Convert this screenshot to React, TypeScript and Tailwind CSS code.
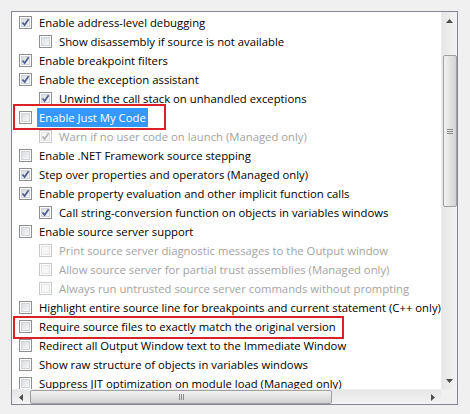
import React from "react";

type Row = { t: string; c: boolean; l: number; d?: boolean; hl?: boolean };

const rows: Row[] = [
  { t: "Enable address-level debugging", c: true, l: 0 },
  { t: "Show disassembly if source is not available", c: false, l: 1 },
  { t: "Enable breakpoint filters", c: true, l: 0 },
  { t: "Enable the exception assistant", c: true, l: 0 },
  { t: "Unwind the call stack on unhandled exceptions", c: true, l: 1 },
  { t: "Enable Just My Code", c: false, l: 0, hl: true },
  { t: "Warn if no user code on launch (Managed only)", c: true, l: 1, d: true },
  { t: "Enable .NET Framework source stepping", c: false, l: 0 },
  { t: "Step over properties and operators (Managed only)", c: true, l: 0 },
  { t: "Enable property evaluation and other implicit function calls", c: true, l: 0 },
  { t: "Call string-conversion function on objects in variables windows", c: true, l: 1 },
  { t: "Enable source server support", c: false, l: 0 },
  { t: "Print source server diagnostic messages to the Output window", c: false, l: 1, d: true },
  { t: "Allow source server for partial trust assemblies (Managed only)", c: false, l: 1, d: true },
  { t: "Always run untrusted source server commands without prompting", c: false, l: 1, d: true },
  { t: "Highlight entire source line for breakpoints and current statement (C++ only)", c: false, l: 0 },
  { t: "Require source files to exactly match the original version", c: false, l: 0 },
  { t: "Redirect all Output Window text to the Immediate Window", c: false, l: 0 },
  { t: "Show raw structure of objects in variables windows", c: false, l: 0 },
  { t: "Suppress JIT optimization on module load (Managed only)", c: false, l: 0 },
];

function Box({ checked, disabled }: { checked: boolean; disabled?: boolean }) {
  return (
    <div
      className={
        "relative w-[13px] h-[13px] shrink-0 border p-[1px] " +
        (disabled ? "border-[#c9c9c9] bg-white" : "border-[#8e8f8f] bg-white")
      }
    >
      <div
        className={
          "w-full h-full border " +
          (disabled
            ? "border-[#e3e3e3] bg-[#f7f7f7]"
            : "border-[#d0d3d8] bg-gradient-to-br from-[#d9dce1] to-[#f7f7f7]")
        }
      />
      {checked && (
        <svg className="absolute left-[1px] top-[1px]" width="9" height="9" viewBox="0 0 9 9">
          <path
            d="M1.5 4.5 L3.6 7 L7.6 1.2"
            fill="none"
            stroke={disabled ? "#b4b4b4" : "#4c5d8f"}
            strokeWidth="1.7"
          />
        </svg>
      )}
    </div>
  );
}

function Tri({ dir }: { dir: "up" | "down" | "left" | "right" }) {
  const p =
    dir === "up"
      ? "M0 4 L3.5 0 L7 4 Z"
      : dir === "down"
      ? "M0 0 L7 0 L3.5 4 Z"
      : dir === "left"
      ? "M4 0 L4 7 L0 3.5 Z"
      : "M0 0 L0 7 L4 3.5 Z";
  const w = dir === "up" || dir === "down" ? 7 : 4;
  const h = dir === "up" || dir === "down" ? 4 : 7;
  return (
    <svg width={w} height={h} viewBox={`0 0 ${w} ${h}`}>
      <path d={p} fill="#4d4d4d" />
    </svg>
  );
}

export default function App() {
  return (
    <div
      className="w-[470px] h-[414px] bg-[#f0f0f0] pt-[11px] pl-[11px] overflow-hidden"
      style={{ fontFamily: '"Open Sans", "Noto Sans", sans-serif' }}
    >
      <div className="w-[447px] h-[394px] border border-[#828790] bg-white grid grid-cols-[1fr_16px] grid-rows-[1fr_15px]">
        <div className="relative overflow-hidden pt-[1px]">
          {rows.map((r, i) => (
            <div
              key={i}
              className={"flex items-center h-[19px] whitespace-nowrap " + (r.l ? "pl-[27px]" : "pl-[7px]")}
            >
              <Box checked={r.c} disabled={r.d} />
              <span
                className={
                  "ml-[5px] px-[2px] h-[19px] leading-[19px] text-[11.3px] " +
                  (r.hl ? "bg-[#3399ff] text-white" : r.d ? "text-[#a3a3a3]" : "text-black")
                }
              >
                {r.t}
              </span>
            </div>
          ))}
          <div className="absolute left-[1px] top-[92px] w-[153px] h-[26px] border-2 border-[#dc2027]" />
          <div className="absolute left-[1px] top-[304px] w-[331px] h-[23px] border-2 border-[#dc2027]" />
        </div>
        <div className="bg-gradient-to-r from-[#e6e6e6] to-[#f3f3f3] border-l border-[#ececec] flex flex-col items-center">
          <div className="h-[17px] flex items-center justify-center">
            <Tri dir="up" />
          </div>
          <div className="mt-[26px] w-[14px] h-[152px] rounded-[2px] border border-[#a0a0a0] bg-gradient-to-r from-[#f2f2f2] via-[#e2e2e2] to-[#d2d2d2] flex items-center justify-center">
            <div className="flex flex-col gap-[1px]">
              <div className="w-[6px] h-[1px] bg-[#8a8a8a]" />
              <div className="w-[6px] h-[1px] bg-[#8a8a8a]" />
              <div className="w-[6px] h-[1px] bg-[#8a8a8a]" />
            </div>
          </div>
          <div className="flex-1" />
          <div className="h-[17px] flex items-center justify-center">
            <Tri dir="down" />
          </div>
        </div>
        <div className="bg-gradient-to-b from-[#e6e6e6] to-[#f3f3f3] border-t border-[#ececec] flex items-center">
          <div className="w-[17px] flex items-center justify-center">
            <Tri dir="left" />
          </div>
          <div className="ml-[1px] w-[302px] h-[14px] rounded-[2px] border border-[#a0a0a0] bg-gradient-to-b from-[#f2f2f2] via-[#e2e2e2] to-[#d2d2d2] flex items-center justify-center">
            <div className="flex gap-[1px]">
              <div className="w-[1px] h-[6px] bg-[#8a8a8a]" />
              <div className="w-[1px] h-[6px] bg-[#8a8a8a]" />
              <div className="w-[1px] h-[6px] bg-[#8a8a8a]" />
            </div>
          </div>
          <div className="flex-1" />
          <div className="w-[17px] flex items-center justify-center">
            <Tri dir="right" />
          </div>
        </div>
        <div className="bg-[#f0f0f0]" />
      </div>
    </div>
  );
}
